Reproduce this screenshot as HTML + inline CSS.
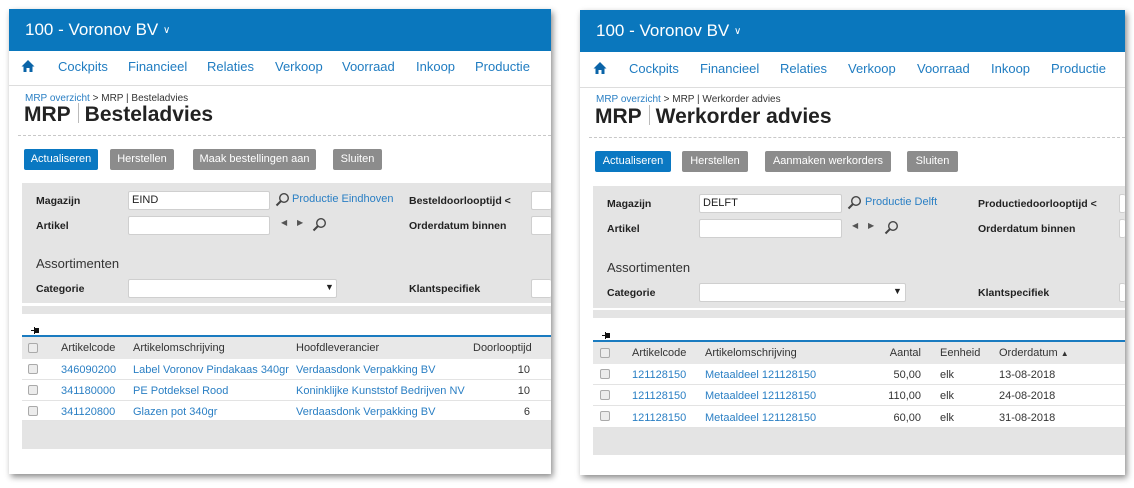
<!DOCTYPE html>
<html><head><meta charset="utf-8"><style>
*{margin:0;padding:0;box-sizing:border-box}
body{width:1134px;height:488px;background:#fff;position:relative;overflow:hidden;font-family:"Liberation Sans",Arial,sans-serif}
.a{position:absolute;white-space:nowrap}
.panel{position:absolute;background:#fff;box-shadow:2px 3px 6px rgba(0,0,0,.45)}
.hdr{position:absolute;background:#0a77bd;color:#fff;font-size:17px;line-height:41px;padding-left:16px}
.nav{font-size:13px;color:#1f7cc1;line-height:16px}
.bc{font-size:10px;color:#333}
.bc span{color:#2a7fc4}
.ttl{font-size:21px;font-weight:bold;color:#222;line-height:26px}
.ttl i{display:inline-block;width:1px;height:20px;background:#bbb;margin:0 6px -2px 7px}
.dash{height:0;border-top:1px dashed #c8c8c8}
.btn{height:21px;line-height:21px;font-size:11px;color:#fff;text-align:center;background:#8c8c8c;border-radius:2px}
.btn.p{background:#0a78c2}
.gray{background:#e4e4e4}
.lbl{font-size:10.5px;font-weight:bold;color:#222;line-height:14px}
.inp{height:19px;background:#fff;border:1px solid #cfcfcf;border-radius:2px;font-size:11px;line-height:17px;padding-left:3px;color:#222}
.lnk{font-size:11px;color:#2a7fc4;line-height:14px}
.ass{font-size:13px;color:#333;line-height:16px}
.th{font-size:11px;color:#333;line-height:14px}
.td{font-size:11px;color:#2a7fc4;line-height:14px}
.tk{font-size:11px;color:#333;line-height:14px}
.cb{width:10px;height:10px;border:1px solid #aaa;border-radius:2px;background:#ececec}
.row{background:#fff;border-bottom:1px solid #e3e3e3}
</style></head><body>

<!-- LEFT PANEL -->
<div class="panel" style="left:9px;top:9px;width:542px;height:465px"></div>
<div class="hdr" style="left:9px;top:9px;width:542px;height:42px">100 - Voronov BV <span style="font-size:10px;vertical-align:2px">&#8744;</span></div>
<svg class="a" style="left:21px;top:59px" width="14" height="14" viewBox="0 0 14 14"><path d="M7 1 L0.5 7.5 H2.5 V13 H5.5 V9 H8.5 V13 H11.5 V7.5 H13.5 Z" fill="#0a64a8"/></svg>
<div class="a nav" style="left:58px;top:59px">Cockpits</div>
<div class="a nav" style="left:128px;top:59px">Financieel</div>
<div class="a nav" style="left:207px;top:59px">Relaties</div>
<div class="a nav" style="left:275px;top:59px">Verkoop</div>
<div class="a nav" style="left:342px;top:59px">Voorraad</div>
<div class="a nav" style="left:416px;top:59px">Inkoop</div>
<div class="a nav" style="left:475px;top:59px">Productie</div>
<div class="a" style="left:9px;top:85px;width:542px;height:1px;background:#ddd"></div>
<div class="a bc" style="left:25px;top:93px"><span>MRP overzicht</span> &gt; MRP | Besteladvies</div>
<div class="a ttl" style="left:24px;top:102px">MRP<i></i>Besteladvies</div>
<div class="a dash" style="left:18px;top:135px;width:533px"></div>
<div class="a btn p" style="left:24px;top:149px;width:74px">Actualiseren</div>
<div class="a btn" style="left:110px;top:149px;width:64px">Herstellen</div>
<div class="a btn" style="left:193px;top:149px;width:123px">Maak bestellingen aan</div>
<div class="a btn" style="left:333px;top:149px;width:49px">Sluiten</div>
<div class="a gray" style="left:22px;top:183px;width:529px;height:120px"></div>
<div class="a gray" style="left:22px;top:306px;width:529px;height:8px"></div>
<div class="a lbl" style="left:36px;top:194px">Magazijn</div>
<div class="a inp" style="left:128px;top:191px;width:142px">EIND</div>
<svg class="a" style="left:275px;top:192px" width="15" height="15" viewBox="0 0 15 15"><circle cx="9" cy="6" r="4.3" fill="none" stroke="#444" stroke-width="1.4"/><path d="M6 9 L1.5 13.5" stroke="#444" stroke-width="2"/></svg>
<div class="a lnk" style="left:292px;top:192px">Productie Eindhoven</div>
<div class="a lbl" style="left:409px;top:194px">Besteldoorlooptijd &lt;</div>
<div class="a inp" style="left:531px;top:191px;width:20px;border-right:none"></div>
<div class="a lbl" style="left:36px;top:219px">Artikel</div>
<div class="a inp" style="left:128px;top:216px;width:142px"></div>
<div class="a" style="left:281px;top:218px;font-size:8px;color:#555">&#9664;</div>
<div class="a" style="left:297px;top:218px;font-size:8px;color:#555">&#9654;</div>
<svg class="a" style="left:312px;top:217px" width="15" height="15" viewBox="0 0 15 15"><circle cx="9" cy="6" r="4.3" fill="none" stroke="#444" stroke-width="1.4"/><path d="M6 9 L1.5 13.5" stroke="#444" stroke-width="2"/></svg>
<div class="a lbl" style="left:409px;top:219px">Orderdatum binnen</div>
<div class="a inp" style="left:531px;top:216px;width:20px;border-right:none"></div>
<div class="a ass" style="left:36px;top:256px">Assortimenten</div>
<div class="a lbl" style="left:36px;top:282px">Categorie</div>
<div class="a inp" style="left:128px;top:279px;width:209px"></div>
<div class="a" style="left:325px;top:282px;font-size:9px;color:#222">&#9660;</div>
<div class="a lbl" style="left:409px;top:282px">Klantspecifiek</div>
<div class="a inp" style="left:531px;top:279px;width:20px;border-right:none"></div>
<svg class="a" style="left:31px;top:327px" width="9" height="7" viewBox="0 0 9 7"><rect x="3" y="1" width="5" height="5" fill="#111"/><rect x="0" y="3" width="3" height="1" fill="#111"/><rect x="3" y="0" width="1" height="7" fill="#111"/></svg>
<div class="a" style="left:22px;top:335px;width:529px;height:2px;background:#1a7bc0"></div>
<div class="a" style="left:22px;top:337px;width:529px;height:22px;background:#e8e8e8"></div>
<div class="a cb" style="left:28px;top:343px"></div>
<div class="a th" style="left:61px;top:341px">Artikelcode</div>
<div class="a th" style="left:133px;top:341px">Artikelomschrijving</div>
<div class="a th" style="left:296px;top:341px">Hoofdleverancier</div>
<div class="a th" style="left:473px;top:341px">Doorlooptijd</div>
<div class="a row" style="left:22px;top:359px;width:529px;height:21px"></div>
<div class="a row" style="left:22px;top:380px;width:529px;height:21px"></div>
<div class="a row" style="left:22px;top:401px;width:529px;height:20px"></div>
<div class="a cb" style="left:28px;top:364px"></div>
<div class="a cb" style="left:28px;top:385px"></div>
<div class="a cb" style="left:28px;top:406px"></div>
<div class="a td" style="left:61px;top:363px">346090200</div>
<div class="a td" style="left:133px;top:363px">Label Voronov Pindakaas 340gr</div>
<div class="a td" style="left:296px;top:363px">Verdaasdonk Verpakking BV</div>
<div class="a tk" style="left:510px;top:363px;width:20px;text-align:right">10</div>
<div class="a td" style="left:61px;top:384px">341180000</div>
<div class="a td" style="left:133px;top:384px">PE Potdeksel Rood</div>
<div class="a td" style="left:296px;top:384px">Koninklijke Kunststof Bedrijven NV</div>
<div class="a tk" style="left:510px;top:384px;width:20px;text-align:right">10</div>
<div class="a td" style="left:61px;top:405px">341120800</div>
<div class="a td" style="left:133px;top:405px">Glazen pot 340gr</div>
<div class="a td" style="left:296px;top:405px">Verdaasdonk Verpakking BV</div>
<div class="a tk" style="left:510px;top:405px;width:20px;text-align:right">6</div>
<div class="a gray" style="left:22px;top:421px;width:529px;height:28px"></div>

<!-- RIGHT PANEL -->
<div class="panel" style="left:580px;top:10px;width:545px;height:465px"></div>
<div class="hdr" style="left:580px;top:10px;width:545px;height:42px">100 - Voronov BV <span style="font-size:10px;vertical-align:2px">&#8744;</span></div>
<svg class="a" style="left:593px;top:61px" width="14" height="14" viewBox="0 0 14 14"><path d="M7 1 L0.5 7.5 H2.5 V13 H5.5 V9 H8.5 V13 H11.5 V7.5 H13.5 Z" fill="#0a64a8"/></svg>
<div class="a nav" style="left:629px;top:61px">Cockpits</div>
<div class="a nav" style="left:700px;top:61px">Financieel</div>
<div class="a nav" style="left:780px;top:61px">Relaties</div>
<div class="a nav" style="left:848px;top:61px">Verkoop</div>
<div class="a nav" style="left:917px;top:61px">Voorraad</div>
<div class="a nav" style="left:991px;top:61px">Inkoop</div>
<div class="a nav" style="left:1051px;top:61px">Productie</div>
<div class="a" style="left:580px;top:87px;width:545px;height:1px;background:#ddd"></div>
<div class="a bc" style="left:596px;top:94px"><span>MRP overzicht</span> &gt; MRP | Werkorder advies</div>
<div class="a ttl" style="left:595px;top:104px">MRP<i></i>Werkorder advies</div>
<div class="a dash" style="left:589px;top:137px;width:536px"></div>
<div class="a btn p" style="left:595px;top:151px;width:76px">Actualiseren</div>
<div class="a btn" style="left:682px;top:151px;width:66px">Herstellen</div>
<div class="a btn" style="left:765px;top:151px;width:126px">Aanmaken werkorders</div>
<div class="a btn" style="left:907px;top:151px;width:51px">Sluiten</div>
<div class="a gray" style="left:593px;top:186px;width:532px;height:122px"></div>
<div class="a gray" style="left:593px;top:310px;width:532px;height:8px"></div>
<div class="a lbl" style="left:607px;top:197px">Magazijn</div>
<div class="a inp" style="left:699px;top:194px;width:143px">DELFT</div>
<svg class="a" style="left:847px;top:195px" width="15" height="15" viewBox="0 0 15 15"><circle cx="9" cy="6" r="4.3" fill="none" stroke="#444" stroke-width="1.4"/><path d="M6 9 L1.5 13.5" stroke="#444" stroke-width="2"/></svg>
<div class="a lnk" style="left:865px;top:195px">Productie Delft</div>
<div class="a lbl" style="left:978px;top:197px">Productiedoorlooptijd &lt;</div>
<div class="a inp" style="left:1119px;top:194px;width:6px;border-right:none"></div>
<div class="a lbl" style="left:607px;top:222px">Artikel</div>
<div class="a inp" style="left:699px;top:219px;width:143px"></div>
<div class="a" style="left:852px;top:221px;font-size:8px;color:#555">&#9664;</div>
<div class="a" style="left:868px;top:221px;font-size:8px;color:#555">&#9654;</div>
<svg class="a" style="left:884px;top:220px" width="15" height="15" viewBox="0 0 15 15"><circle cx="9" cy="6" r="4.3" fill="none" stroke="#444" stroke-width="1.4"/><path d="M6 9 L1.5 13.5" stroke="#444" stroke-width="2"/></svg>
<div class="a lbl" style="left:978px;top:222px">Orderdatum binnen</div>
<div class="a inp" style="left:1119px;top:219px;width:6px;border-right:none"></div>
<div class="a ass" style="left:607px;top:260px">Assortimenten</div>
<div class="a lbl" style="left:607px;top:286px">Categorie</div>
<div class="a inp" style="left:699px;top:283px;width:207px"></div>
<div class="a" style="left:893px;top:286px;font-size:9px;color:#222">&#9660;</div>
<div class="a lbl" style="left:978px;top:286px">Klantspecifiek</div>
<div class="a inp" style="left:1119px;top:283px;width:6px;border-right:none"></div>
<svg class="a" style="left:602px;top:332px" width="9" height="7" viewBox="0 0 9 7"><rect x="3" y="1" width="5" height="5" fill="#111"/><rect x="0" y="3" width="3" height="1" fill="#111"/><rect x="3" y="0" width="1" height="7" fill="#111"/></svg>
<div class="a" style="left:593px;top:340px;width:532px;height:2px;background:#1a7bc0"></div>
<div class="a" style="left:593px;top:342px;width:532px;height:22px;background:#e8e8e8"></div>
<div class="a cb" style="left:600px;top:348px"></div>
<div class="a th" style="left:632px;top:346px">Artikelcode</div>
<div class="a th" style="left:705px;top:346px">Artikelomschrijving</div>
<div class="a th" style="left:870px;top:346px;width:51px;text-align:right">Aantal</div>
<div class="a th" style="left:940px;top:346px">Eenheid</div>
<div class="a th" style="left:999px;top:346px">Orderdatum <span style="font-size:8px">&#9650;</span></div>
<div class="a row" style="left:593px;top:364px;width:532px;height:21px"></div>
<div class="a row" style="left:593px;top:385px;width:532px;height:21px"></div>
<div class="a row" style="left:593px;top:406px;width:532px;height:22px"></div>
<div class="a cb" style="left:600px;top:369px"></div>
<div class="a cb" style="left:600px;top:390px"></div>
<div class="a cb" style="left:600px;top:411px"></div>
<div class="a td" style="left:632px;top:368px">121128150</div>
<div class="a td" style="left:705px;top:368px">Metaaldeel 121128150</div>
<div class="a tk" style="left:870px;top:368px;width:51px;text-align:right">50,00</div>
<div class="a tk" style="left:940px;top:368px">elk</div>
<div class="a tk" style="left:999px;top:368px">13-08-2018</div>
<div class="a td" style="left:632px;top:389px">121128150</div>
<div class="a td" style="left:705px;top:389px">Metaaldeel 121128150</div>
<div class="a tk" style="left:870px;top:389px;width:51px;text-align:right">110,00</div>
<div class="a tk" style="left:940px;top:389px">elk</div>
<div class="a tk" style="left:999px;top:389px">24-08-2018</div>
<div class="a td" style="left:632px;top:411px">121128150</div>
<div class="a td" style="left:705px;top:411px">Metaaldeel 121128150</div>
<div class="a tk" style="left:870px;top:411px;width:51px;text-align:right">60,00</div>
<div class="a tk" style="left:940px;top:411px">elk</div>
<div class="a tk" style="left:999px;top:411px">31-08-2018</div>
<div class="a gray" style="left:593px;top:428px;width:532px;height:27px"></div>
</body></html>
